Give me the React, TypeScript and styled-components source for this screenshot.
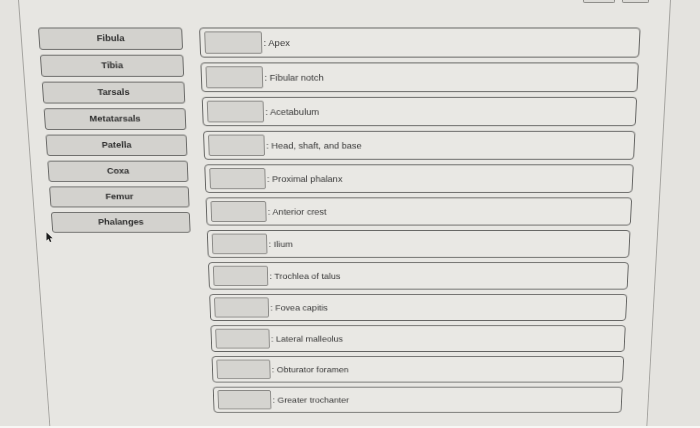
import { FC } from "react";
import styled, { createGlobalStyle } from "styled-components";

const bones = [
  "Fibula",
  "Tibia",
  "Tarsals",
  "Metatarsals",
  "Patella",
  "Coxa",
  "Femur",
  "Phalanges",
];

const landmarks = [
  "Apex",
  "Fibular notch",
  "Acetabulum",
  "Head, shaft, and base",
  "Proximal phalanx",
  "Anterior crest",
  "Ilium",
  "Trochlea of talus",
  "Fovea capitis",
  "Lateral malleolus",
  "Obturator foramen",
  "Greater trochanter",
];

const App: FC = () => {
  return (
    <>
      <GlobalStyle />
      <Screen>
        <Sheet>
          <Page>
            <Toolbar>
              <Tab $width={32} />
              <Tab $width={27} />
            </Toolbar>

            <Columns>
              <BoneList>
                {bones.map((bone) => (
                  <BoneButton key={bone}>{bone}</BoneButton>
                ))}
              </BoneList>

              <MatchList>
                {landmarks.map((name) => (
                  <MatchRow key={name}>
                    <DropSlot />
                    <MatchLabel>: {name}</MatchLabel>
                  </MatchRow>
                ))}
              </MatchList>
            </Columns>
          </Page>
        </Sheet>

        <Cursor width="8" height="11" viewBox="0 0 8 11">
          <path d="M0.5 0.5 L0.5 8.5 L2.5 6.8 L4 10 L5.3 9.4 L3.9 6.3 L6.6 6.2 Z" fill="#1c1c1c" />
        </Cursor>
      </Screen>
    </>
  );
};

const GlobalStyle = createGlobalStyle`
  html,
  body {
    margin: 0;
    background: #f7f7f5;
  }

  * {
    box-sizing: border-box;
  }
`;

const Screen = styled.div`
  position: relative;
  width: 700px;
  height: 426px;
  overflow: hidden;
  background: #e4e3df;
  font-family: "Liberation Sans", Arial, sans-serif;
`;

// the photo was taken at a slight angle, so the whole sheet leans back
const Sheet = styled.div`
  width: 700px;
  transform-origin: 390px 0;
  transform: perspective(800px) rotateX(-9deg);
`;

const Page = styled.div`
  margin-left: 18px;
  width: 653px;
  height: 490px;
  border-left: 1px solid #a4a39f;
  border-right: 1px solid #a4a39f;
  background: #e7e6e2;
`;

const Toolbar = styled.div`
  display: flex;
  justify-content: flex-end;
  gap: 7px;
  height: 3px;
  padding-right: 21px;
`;

const Tab = styled.div<{ $width: number }>`
  width: ${(props) => props.$width}px;
  height: 3px;
  border: 1px solid #8d8c88;
  border-top: none;
  border-radius: 0 0 2px 2px;
  background: #dddcd8;
`;

const Columns = styled.div`
  display: flex;
  gap: 17px;
  margin-top: 25px;
  padding-left: 17px;
`;

const BoneList = styled.div`
  display: flex;
  flex-direction: column;
  gap: 5px;
  width: 145px;
`;

const BoneButton = styled.div`
  height: 23px;
  line-height: 20px;
  border: 1.6px solid #6a6a68;
  border-radius: 3px;
  background: #d3d2ce;
  color: #2b2b2b;
  font-size: 9.5px;
  font-weight: 700;
  text-align: center;
`;

const MatchList = styled.div`
  display: flex;
  flex-direction: column;
  gap: 5px;
  width: 444px;
`;

const MatchRow = styled.div`
  display: flex;
  align-items: center;
  gap: 2px;
  height: 31px;
  padding: 0 3.5px;
  border: 1.8px solid #646462;
  border-radius: 4px;
  background: #e9e8e4;
`;

const DropSlot = styled.div`
  width: 58px;
  height: 23px;
  border: 1.3px solid #8a8986;
  border-radius: 2px;
  background: #d5d4d0;
`;

const MatchLabel = styled.span`
  color: #353535;
  font-size: 9.5px;
  white-space: nowrap;
`;

const Cursor = styled.svg`
  position: absolute;
  left: 46px;
  top: 232px;
`;

export default App;
